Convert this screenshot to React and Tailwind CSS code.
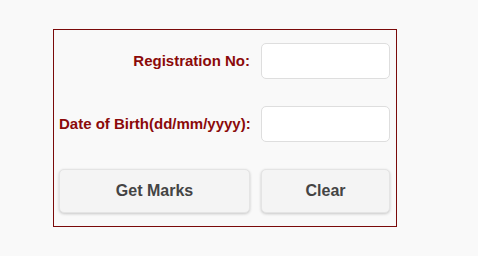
export default function App() {
  return (
    <div
      className="w-[478px] h-[256px] bg-[#f9f9f9] pt-[29px] pl-[53px]"
      style={{ fontFamily: '"Liberation Sans", Arial, sans-serif' }}
    >
      <div className="w-[344px] h-[198px] border border-[#7a0a0a] px-[5px] pt-[13px] flex flex-col gap-[27px]">
        <div className="flex items-center gap-[11px]">
          <label className="w-[191px] text-right font-bold text-[15px] text-[#8b0a0a] whitespace-nowrap">
            Registration No:
          </label>
          <input
            type="text"
            className="w-[129px] h-[36px] bg-white border border-[#dedede] rounded-[5px] outline-none"
          />
        </div>
        <div className="flex items-center gap-[11px]">
          <label className="w-[191px] text-right font-bold text-[15px] text-[#8b0a0a] whitespace-nowrap">
            Date of Birth(dd/mm/yyyy):
          </label>
          <input
            type="text"
            className="w-[129px] h-[36px] bg-white border border-[#dedede] rounded-[5px] outline-none"
          />
        </div>
        <div className="flex items-center gap-[11px]">
          <button className="w-[191px] h-[44px] bg-[#f4f4f4] border border-[#e4e4e4] rounded-[5px] shadow-[0_1px_3px_rgba(0,0,0,0.2)] font-bold text-[16px] text-[#444]">
            Get Marks
          </button>
          <button className="w-[129px] h-[44px] bg-[#f4f4f4] border border-[#e4e4e4] rounded-[5px] shadow-[0_1px_3px_rgba(0,0,0,0.2)] font-bold text-[16px] text-[#444]">
            Clear
          </button>
        </div>
      </div>
    </div>
  );
}
